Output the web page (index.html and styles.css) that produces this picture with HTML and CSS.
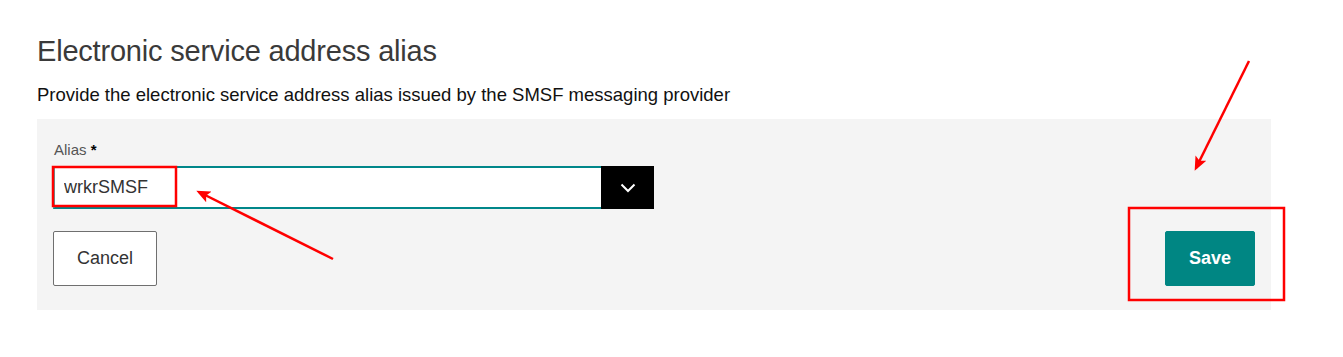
FILE: index.html
```html
<!DOCTYPE html>
<html lang="en">
<head>
    <meta charset="UTF-8">
    <title>Electronic service address alias</title>
    <link rel="stylesheet" href="styles.css">
</head>
<body>
    <div class="page">
        <h2 class="title">Electronic service address alias</h2>
        <p class="intro">Provide the electronic service address alias issued by the SMSF messaging provider</p>

        <div class="panel">
            <label class="label" for="alias">Alias <span class="req">*</span></label>
            <div class="combo">
                <input id="alias" class="combo-input" type="text" value="wrkrSMSF">
                <button class="combo-btn" type="button">
                    <svg width="16" height="10" viewBox="0 0 16 10"><path d="M1.5 1.5 L8 8 L14.5 1.5" fill="none" stroke="#fff" stroke-width="2"/></svg>
                </button>
            </div>
            <div class="actions">
                <button class="btn btn-cancel" type="button">Cancel</button>
                <button class="btn btn-save" type="button">Save</button>
            </div>
        </div>

        <!-- annotation marks drawn over the form -->
        <svg class="marks" width="1343" height="357" viewBox="0 0 1343 357">
            <defs>
                <marker id="head" markerWidth="14" markerHeight="12" refX="11" refY="6" orient="auto" markerUnits="userSpaceOnUse">
                    <path d="M0 0 L14 6 L0 12 L3 6 Z" fill="#f00"/>
                </marker>
            </defs>
            <rect x="53" y="167" width="123" height="39" fill="none" stroke="#f00" stroke-width="2.5"/>
            <line x1="333" y1="259" x2="199" y2="192" stroke="#f00" stroke-width="2.5" marker-end="url(#head)"/>
            <line x1="1249" y1="61" x2="1196" y2="168" stroke="#f00" stroke-width="2.5" marker-end="url(#head)"/>
            <rect x="1129" y="208" width="155" height="92" fill="none" stroke="#f00" stroke-width="2.5"/>
        </svg>
    </div>
</body>
</html>
```

FILE: styles.css
```css
* {
    box-sizing: border-box;
}
body {
    margin: 0;
    background: #fff;
    font-family: "Liberation Sans", Arial, sans-serif;
    color: #222;
}
.page {
    position: relative;
    padding: 34px 72px 0 37px;
    height: 357px;
}
.title {
    margin: 0;
    font-size: 29px;
    font-weight: 300;
    line-height: 34px;
    color: #3a3a3a;
    letter-spacing: -0.2px;
}
.intro {
    margin: 17px 0 14px;
    font-size: 18.5px;
    line-height: 20px;
    color: #111;
}
.panel {
    background: #f4f4f4;
    padding: 22px 16px 24px;
}
.label {
    display: block;
    font-size: 15px;
    line-height: 18px;
    color: #555;
    margin-bottom: 7px;
    padding-left: 1px;
}
.req {
    color: #000;
    font-weight: bold;
}
.combo {
    display: flex;
    width: 601px;
    height: 43px;
}
.combo-input {
    flex: 1;
    min-width: 0;
    border: 2px solid #00878a;
    border-left-color: #4fa7a5;
    border-right: 0;
    background: #fff;
    font-family: inherit;
    font-size: 18px;
    color: #333;
    padding: 0 0 0 9px;
    outline: none;
}
.combo-btn {
    width: 53px;
    border: 0;
    background: #000;
    display: flex;
    align-items: center;
    justify-content: center;
    padding: 0;
}
.actions {
    display: flex;
    justify-content: space-between;
    margin-top: 22px;
}
.btn {
    height: 55px;
    border-radius: 2px;
    font-family: inherit;
    font-size: 18px;
    padding: 0 23px;
}
.btn-cancel {
    background: #fff;
    border: 1px solid #6f6f6f;
    color: #333;
}
.btn-save {
    background: #008683;
    border: 1px solid #008683;
    color: #fff;
    font-weight: bold;
    padding: 0 23px;
}
.marks {
    position: absolute;
    left: 0;
    top: 0;
    pointer-events: none;
}
```
